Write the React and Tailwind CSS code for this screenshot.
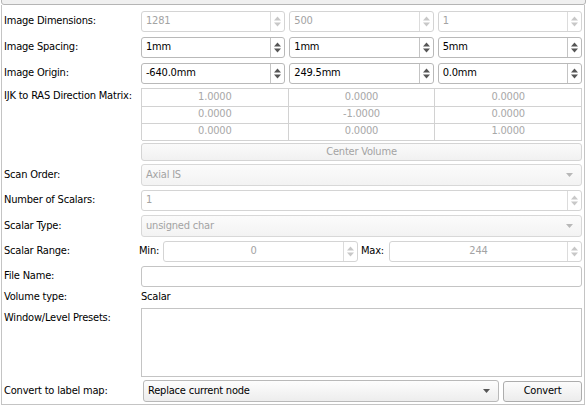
import React from "react";

function SpinArrows({ disabled }) {
  const c = disabled ? "#c8c8c8" : "#555555";
  return (
    <div className={`flex w-[14px] items-center justify-center border-l ${disabled ? "border-[#dcdcdc]" : "border-[#c4c4c4]"}`}>
      <svg width="7" height="11" viewBox="0 0 7 11">
        <path d="M0 4.5 L3.5 0.5 L7 4.5 Z" fill={c} />
        <path d="M0 6.5 L3.5 10.5 L7 6.5 Z" fill={c} />
      </svg>
    </div>
  );
}

function Spin({ value, disabled, center, className = "" }) {
  return (
    <div
      className={`flex h-[21px] rounded-[3px] border bg-white ${
        disabled ? "border-[#d4d4d4] text-[#a3a3a3]" : "border-[#b9b9b9] text-black"
      } ${className}`}
    >
      <div className={`flex flex-1 items-center px-[4px] ${center ? "justify-center" : ""}`}>{value}</div>
      <SpinArrows disabled={disabled} />
    </div>
  );
}

function Combo({ value, disabled, className = "" }) {
  return (
    <div
      className={`flex h-[22px] items-center rounded-[3px] border bg-gradient-to-b ${
        disabled
          ? "border-[#d8d8d8] from-[#fbfbfb] to-[#f3f3f3] text-[#a3a3a3]"
          : "border-[#b9b9b9] from-[#fdfdfd] to-[#ededed] text-black"
      } ${className}`}
    >
      <div className="flex-1 px-[4px]">{value}</div>
      <svg width="7" height="4" viewBox="0 0 7 4" className="mr-[8px]">
        <path d="M0 0 L7 0 L3.5 4 Z" fill={disabled ? "#b8b8b8" : "#555555"} />
      </svg>
    </div>
  );
}

function Row({ label, children, className = "" }) {
  return (
    <div className={`flex items-center ${className}`}>
      <div className="w-[137px] shrink-0">{label}</div>
      <div className="min-w-0 flex-1">{children}</div>
    </div>
  );
}

const matrix = [
  ["1.0000", "0.0000", "0.0000"],
  ["0.0000", "-1.0000", "0.0000"],
  ["0.0000", "0.0000", "1.0000"],
];

export default function App() {
  return (
    <div className="h-[408px] w-[587px] overflow-hidden bg-white font-['DejaVu_Sans','Liberation_Sans',sans-serif] font-stretch-condensed text-[11px] tracking-[-0.2px] text-black">
      <div className="-mt-[17px] ml-[1px] flex h-[22px] w-[585px] items-center rounded-[3px] border border-[#b5b5b5] bg-[#f0f0f0] pl-[21px]">
        Volume Information
      </div>
      <div className="ml-[1px] h-[400px] w-[584px] border-x border-b border-[#c4c4c4] pl-[2px] pr-[2px] pt-[6px]">
        <Row label="Image Dimensions:">
          <div className="flex gap-[4px]">
            <Spin value="1281" disabled className="flex-1" />
            <Spin value="500" disabled className="flex-1" />
            <Spin value="1" disabled className="flex-1" />
          </div>
        </Row>
        <Row label="Image Spacing:" className="mt-[5px]">
          <div className="flex gap-[4px]">
            <Spin value="1mm" className="flex-1" />
            <Spin value="1mm" className="flex-1" />
            <Spin value="5mm" className="flex-1" />
          </div>
        </Row>
        <Row label="Image Origin:" className="mt-[5px]">
          <div className="flex gap-[4px]">
            <Spin value="-640.0mm" className="flex-1" />
            <Spin value="249.5mm" className="flex-1" />
            <Spin value="0.0mm" className="flex-1" />
          </div>
        </Row>
        <div className="mt-[4px] flex items-start">
          <div className="flex h-[17px] w-[137px] shrink-0 items-center">IJK to RAS Direction Matrix:</div>
          <div className="flex-1 border-l border-t border-[#d2d2d2] text-[#a8a8a8]">
            {matrix.map((r, i) => (
              <div key={i} className="grid h-[17px] grid-cols-3">
                {r.map((v, j) => (
                  <div key={j} className="flex items-center justify-center border-b border-r border-[#d2d2d2]">
                    {v}
                  </div>
                ))}
              </div>
            ))}
          </div>
        </div>
        <Row label="" className="mt-[3px]">
          <div className="flex h-[18px] items-center justify-center rounded-[3px] border border-[#d4d4d4] bg-gradient-to-b from-[#fafafa] to-[#f1f1f1] text-[#a3a3a3]">
            Center Volume
          </div>
        </Row>
        <Row label="Scan Order:" className="mt-[3px]">
          <Combo value="Axial IS" disabled />
        </Row>
        <Row label="Number of Scalars:" className="mt-[4px]">
          <Spin value="1" disabled />
        </Row>
        <Row label="Scalar Type:" className="mt-[4px]">
          <Combo value="unsigned char" disabled />
        </Row>
        <div className="mt-[4px] flex items-center">
          <div className="w-[135px] shrink-0">Scalar Range:</div>
          <div className="w-[24px] shrink-0">Min:</div>
          <Spin value="0" disabled center className="w-[195px]" />
          <div className="ml-[3px] w-[28px] shrink-0">Max:</div>
          <Spin value="244" disabled center className="flex-1" />
        </div>
        <Row label="File Name:" className="mt-[4px]">
          <div className="h-[21px] rounded-[3px] border border-[#c4c4c4] bg-white" />
        </Row>
        <Row label="Volume type:" className="mt-[2px] h-[17px]">
          <div>Scalar</div>
        </Row>
        <div className="mt-[2px] flex items-start">
          <div className="flex h-[21px] w-[137px] shrink-0 items-center">Window/Level Presets:</div>
          <div className="h-[69px] flex-1 border border-[#c4c4c4] bg-white" />
        </div>
        <div className="mt-[3px] flex items-center">
          <div className="w-[139px] shrink-0">Convert to label map:</div>
          <Combo value="Replace current node" className="w-[356px]" />
          <div className="ml-[4px] flex h-[21px] flex-1 items-center justify-center rounded-[3px] border border-[#adadad] bg-gradient-to-b from-[#fcfcfc] to-[#ececec]">
            Convert
          </div>
        </div>
      </div>
    </div>
  );
}
